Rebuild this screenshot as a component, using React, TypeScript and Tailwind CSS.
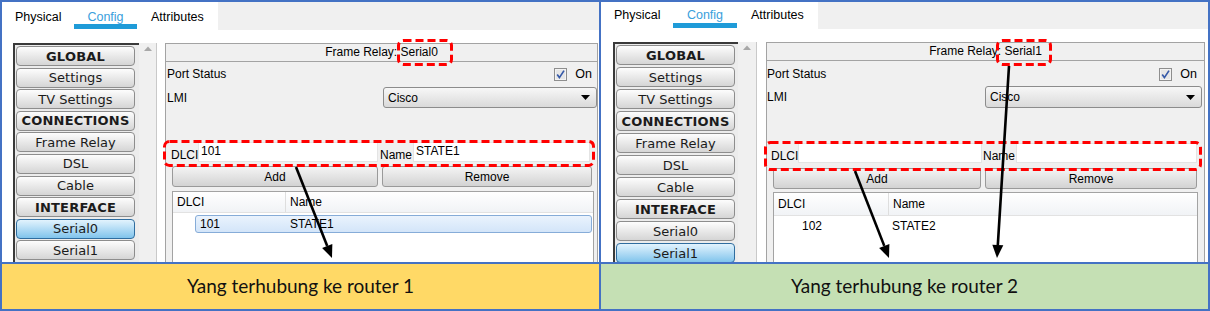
import React from 'react';
import clsx from 'clsx';

const SANS = "font-['Liberation_Sans',Arial,sans-serif]";
const VERA = "font-['DejaVu_Sans',Verdana,sans-serif]";

type Cfg = {
  tabRow: string;
  tabWhite: string;
  tabPad: string;
  configBox: string;
  underline: string;
  body: string;
  sideW: string;
  sideList: string;
  scrollW: string;
  gapW: string;
  panelW: string;
  portRow: string;
  lmiRow: string;
  selectW: string;
  dlciRow: string;
  dlciLabel: string;
  dlciInput: string;
  nameLabel: string;
  nameInput: string;
  btnRow: string;
  addW: string;
  removeW: string;
  tableBox: string;
  headH: string;
  col1: string;
};

const LEFT: Cfg = {
  tabRow: 'h-[28px]',
  tabWhite: 'w-[216px]',
  tabPad: 'pt-[8px]',
  configBox: 'w-[63px]',
  underline: 'h-[5px]',
  body: 'pl-[11px]',
  sideW: 'w-[126px]',
  sideList: 'pt-[1px] gap-[1.6px]',
  scrollW: 'w-[18px]',
  gapW: 'w-[8px]',
  panelW: 'w-[433px]',
  portRow: 'mt-[2px] h-[20px] pl-[1px] pr-[5px]',
  lmiRow: 'mt-[3px] h-[21px] pl-[1px]',
  selectW: 'w-[214px]',
  dlciRow: 'mt-[34px] h-[20px] pl-[5px]',
  dlciLabel: 'w-[27px]',
  dlciInput: 'w-[180px]',
  nameLabel: 'w-[35px] pl-[2px]',
  nameInput: 'w-[177px]',
  btnRow: 'mt-[4px] h-[21px] pl-[6px]',
  addW: 'w-[206px]',
  removeW: 'w-[210px]',
  tableBox: 'mt-[4px] ml-[6px] w-[422px]',
  headH: 'h-[21px]',
  col1: 'w-[113px]',
};

const RIGHT: Cfg = {
  tabRow: 'h-[27px]',
  tabWhite: 'w-[217px]',
  tabPad: 'pt-[6px]',
  configBox: 'w-[64px]',
  underline: 'mt-[1px] h-[5px]',
  body: 'pl-[12px]',
  sideW: 'w-[125px]',
  sideList: 'pt-[1px] gap-[2px]',
  scrollW: 'w-[19px]',
  gapW: 'w-[9px]',
  panelW: 'w-[439px]',
  portRow: 'mt-[3px] h-[20px] pl-0 pr-[7px]',
  lmiRow: 'mt-[2px] h-[22px] pl-0 pr-[2px]',
  selectW: 'w-[217px]',
  dlciRow: 'mt-[35px] h-[20px] pl-[4px]',
  dlciLabel: 'w-[27px]',
  dlciInput: 'w-[184px]',
  nameLabel: 'w-[34px] pl-[1px]',
  nameInput: 'w-[181px]',
  btnRow: 'mt-[5px] h-[21px] pl-[6px]',
  addW: 'w-[208px]',
  removeW: 'w-[212px]',
  tableBox: 'mt-[3px] ml-[6px] w-[425px]',
  headH: 'h-[23px]',
  col1: 'w-[115px]',
};

const menu = [
  { t: 'GLOBAL', head: true },
  { t: 'Settings' },
  { t: 'TV Settings' },
  { t: 'CONNECTIONS', head: true },
  { t: 'Frame Relay' },
  { t: 'DSL' },
  { t: 'Cable' },
  { t: 'INTERFACE', head: true },
  { t: 'Serial0' },
  { t: 'Serial1' },
  { t: '' },
];

function SideBtn({ label, head, active }: { label: string; head?: boolean; active?: boolean }) {
  return (
    <div
      className={clsx(
        'h-[20px] w-[119px] shrink-0 rounded-[4px] border flex items-center justify-center text-[13px] leading-none text-[#1b1b1b]',
        active
          ? 'border-[#2f6d9f] bg-linear-to-b from-[#e2f3fd] to-[#80c4ec]'
          : 'border-[#8d8d8d] bg-linear-to-b from-[#fdfdfd] to-[#d5d5d5]',
        head && 'font-bold tracking-[0.2px]'
      )}
    >
      {label}
    </div>
  );
}

function CheckBox() {
  return (
    <svg width="13" height="13" viewBox="0 0 13 13">
      <rect x="0.5" y="0.5" width="12" height="12" fill="#f3f3f3" stroke="#8e8e8e" />
      <rect x="2" y="2" width="9" height="9" fill="#e6e6e6" />
      <path d="M3.2 6.6 L5.4 9.6 L10 2.6" stroke="#3559a8" strokeWidth="1.7" fill="none" />
    </svg>
  );
}

function Screenshot({
  c,
  active,
  port,
  dlci,
  name,
  row,
}: {
  c: Cfg;
  active: string;
  port: string;
  dlci: string;
  name: string;
  row: React.ReactNode;
}) {
  return (
    <div className={clsx('flex flex-col h-full bg-white overflow-hidden', SANS)}>
      {/* tab strip */}
      <div className={clsx('flex shrink-0 bg-[#f0f0f0]', c.tabRow)}>
        <div className={clsx('flex bg-white text-[12.5px] leading-[14px] text-black', c.tabWhite)}>
          <div className={clsx('w-[72px] pl-[13px]', c.tabPad)}>Physical</div>
          <div className={clsx('flex flex-col', c.configBox, c.tabPad)}>
            <div className="text-center text-[#3aa0dc]">Config</div>
            <div className={clsx('bg-[#1f9bd8]', c.underline)} />
          </div>
          <div className={clsx('pl-[14px]', c.tabPad)}>Attributes</div>
        </div>
      </div>
      <div className="h-[13px] shrink-0" />

      {/* body */}
      <div className={clsx('flex flex-1 min-h-0', c.body)}>
        <div className={clsx('border-l-2 border-t-2 border-[#3a3a3a] bg-[#ececec] overflow-hidden', c.sideW, VERA)}>
          <div className={clsx('flex flex-col pl-[1px]', c.sideList)}>
            {menu.map((m, i) => (
              <SideBtn key={i} label={m.t} head={m.head} active={m.t === active} />
            ))}
          </div>
        </div>
        <div className={clsx('bg-[#f0f0f0] border-r border-[#c9c9c9] flex justify-center pt-[3px]', c.scrollW)}>
          <svg width="8" height="5" viewBox="0 0 8 5">
            <path d="M0 5 L4 0.5 L8 5 Z" fill="#a8a8a8" />
          </svg>
        </div>
        <div className={clsx('shrink-0', c.gapW)} />

        {/* main panel */}
        <div className={clsx('flex flex-col border-l border-t border-r border-[#a3a3a3] bg-[#f0f0f0] text-[12px] text-black', c.panelW)}>
          <div className="h-[18px] shrink-0 border-b border-[#a3a3a3] text-center leading-[17px]">
            Frame Relay: {port}
          </div>
          <div className={clsx('flex items-center shrink-0', c.portRow)}>
            <span>Port Status</span>
            <div className="ml-auto flex items-center gap-[8px]">
              <CheckBox />
              <span className="text-[12.5px]">On</span>
            </div>
          </div>
          <div className={clsx('flex items-center shrink-0', c.lmiRow)}>
            <span>LMI</span>
            <div
              className={clsx(
                'ml-auto h-full flex items-center rounded-[3px] border border-[#8c8c8c] bg-linear-to-b from-[#f7f7f7] to-[#dadada] pl-[4px] pr-[6px]',
                c.selectW
              )}
            >
              <span>Cisco</span>
              <svg className="ml-auto" width="9" height="5" viewBox="0 0 9 5">
                <path d="M0 0 H9 L4.5 5 Z" fill="#000" />
              </svg>
            </div>
          </div>
          <div className={clsx('flex shrink-0', c.dlciRow)}>
            <span className={clsx('self-end leading-[13px]', c.dlciLabel)}>DLCI</span>
            <div className={clsx('bg-white border border-[#e4e4e4] pl-[2px] leading-[17px]', c.dlciInput)}>{dlci}</div>
            <span className={clsx('self-end leading-[13px]', c.nameLabel)}>Name</span>
            <div className={clsx('bg-white border border-[#e4e4e4] pl-[2px] leading-[17px]', c.nameInput)}>{name}</div>
          </div>
          <div className={clsx('flex gap-[4px] shrink-0', c.btnRow)}>
            <div className={clsx('h-full rounded-[3px] border border-[#9a9a9a] bg-linear-to-b from-[#f4f4f4] to-[#d3d3d3] flex items-center justify-center', c.addW)}>
              Add
            </div>
            <div className={clsx('h-full rounded-[3px] border border-[#9a9a9a] bg-linear-to-b from-[#f4f4f4] to-[#d3d3d3] flex items-center justify-center', c.removeW)}>
              Remove
            </div>
          </div>
          <div className={clsx('flex-1 flex flex-col border-l border-t border-r border-[#a3a3a3] bg-white', c.tableBox)}>
            <div className={clsx('flex shrink-0 border-b border-[#e2e2e2] bg-linear-to-b from-white to-[#f1f3f6]', c.headH)}>
              <div className={clsx('flex items-center pl-[4px] border-r border-[#dedede]', c.col1)}>DLCI</div>
              <div className="flex items-center pl-[4px]">Name</div>
            </div>
            {row}
          </div>
        </div>
      </div>
    </div>
  );
}

function Arrow({ x1, y1, x2, y2 }: { x1: number; y1: number; x2: number; y2: number }) {
  const dx = x2 - x1;
  const dy = y2 - y1;
  const len = Math.hypot(dx, dy);
  const ux = dx / len;
  const uy = dy / len;
  const hl = 13;
  const hw = 5.5;
  const bx = x2 - ux * hl;
  const by = y2 - uy * hl;
  const px = -uy;
  const py = ux;
  return (
    <g>
      <line x1={x1} y1={y1} x2={bx} y2={by} stroke="#000" strokeWidth={2.6} />
      <polygon
        points={`${x2},${y2} ${bx + px * hw},${by + py * hw} ${bx - px * hw},${by - py * hw}`}
        fill="#000"
      />
    </g>
  );
}

function DashBox({ x1, y1, x2, y2 }: { x1: number; y1: number; x2: number; y2: number }) {
  return (
    <rect
      x={x1 + 1.5}
      y={y1 + 1.5}
      width={x2 - x1 - 3}
      height={y2 - y1 - 3}
      rx={5}
      fill="none"
      stroke="#ff0000"
      strokeWidth={3}
      strokeDasharray="8 4"
    />
  );
}

export default function App() {
  return (
    <div className="relative w-[1210px] h-[311px] bg-[#4472c4] p-[2px] grid grid-cols-[597px_607px] grid-rows-[260px_45px] gap-[2px]">
      <Screenshot
        c={LEFT}
        active="Serial0"
        port="Serial0"
        dlci="101"
        name="STATE1"
        row={
          <div className="mt-[2px] ml-[22px] mr-[1px] h-[18px] flex items-center rounded-[3px] border border-[#86acd8] bg-linear-to-b from-[#eaf3fd] to-[#d3e5f9]">
            <span className="w-[90px] pl-[4px]">101</span>
            <span className="pl-[4px]">STATE1</span>
          </div>
        }
      />
      <Screenshot
        c={RIGHT}
        active="Serial1"
        port="Serial1"
        dlci=""
        name=""
        row={
          <div className="mt-[1px] h-[18px] flex items-center">
            <span className="w-[115px] pl-[28px]">102</span>
            <span className="pl-[3px]">STATE2</span>
          </div>
        }
      />
      <div className="bg-[#ffd966] flex items-center justify-center font-['Lato',sans-serif] text-[19px] text-[#111]">
        Yang terhubung ke router 1
      </div>
      <div className="bg-[#c5e0b4] flex items-center justify-center font-['Lato',sans-serif] text-[19px] text-[#111]">
        Yang terhubung ke router 2
      </div>

      <svg className="absolute left-0 top-0 pointer-events-none" width="1210" height="311" viewBox="0 0 1210 311">
        <DashBox x1={397} y1={39} x2={453} y2={66} />
        <DashBox x1={163} y1={140} x2={595} y2={167} />
        <DashBox x1={996} y1={39} x2={1052} y2={66} />
        <DashBox x1={764} y1={141} x2={1202} y2={171} />
        <Arrow x1={296} y1={167} x2={332} y2={258} />
        <Arrow x1={855} y1={171} x2={889} y2={258} />
        <Arrow x1={1009} y1={66} x2={997} y2={258} />
      </svg>
    </div>
  );
}
